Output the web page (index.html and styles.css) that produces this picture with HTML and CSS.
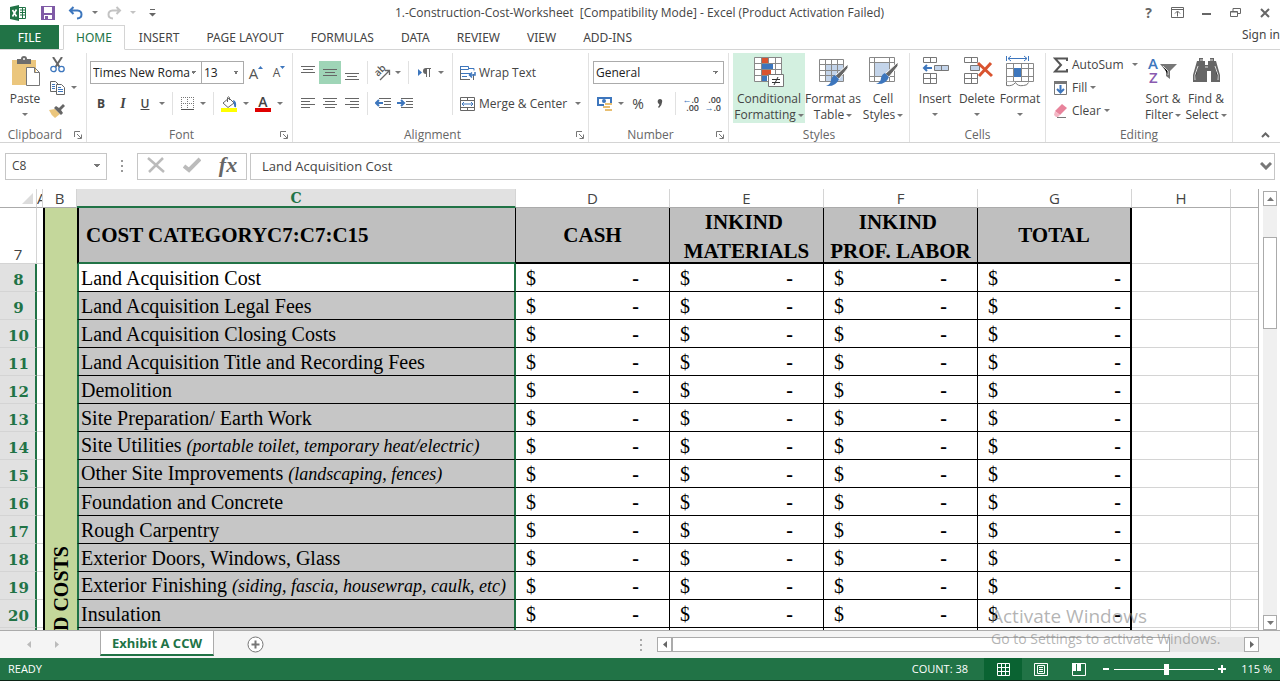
FILE: index.html
```html
<!DOCTYPE html>
<html lang="en">

<head>
    <meta charset="UTF-8">
    <meta name="viewport" content="width=device-width, initial-scale=1.0">
    <title>1.-Construction-Cost-Worksheet - Excel</title>
    <link rel="stylesheet" href="styles.css">
</head>

<body>
    <header class="titlebar">
        <div class="quick">
            <button class="btn w30" aria-label="Excel"><svg width="16" height="16"><path fill="#217346" d="M0 2l9-2v16l-9-2z"/><path fill="none" stroke="#217346" d="M9 2.500h6.500v11H9M10 5h5M10 7.500h5M10 10h5M12.500 3v10"/><path fill="none" stroke="#fff" stroke-width="1.600" d="M2.500 5l4 6.500M6.500 4.500l-4 7"/></svg></button>
            <button class="btn w30" aria-label="Save"><svg width="14" height="14"><path fill="#7f5aa6" d="M0 0h14v14H0z"/><path fill="#fff" d="M3 1h8v6H3zM3 9h8v4H3z"/><path fill="#7f5aa6" d="M4 10h3v3H4z"/></svg></button>
            <button class="btn w26" aria-label="Undo"><svg width="16" height="14"><path fill="none" stroke="#3d76bd" stroke-width="2" d="M5.500 1L2 4.500 5.500 8M2 4.500h7.500q4 .3 4 4t-4.500 4"/></svg></button>
            <button class="btn w12" aria-label="Undo list"><i class="caret"></i></button>
            <button class="btn w26" aria-label="Redo"><svg width="16" height="14"><path fill="none" stroke="#c3c3c3" stroke-width="2" d="M10.500 1L14 4.500 10.500 8M14 4.500H6.500q-4 .3-4 4t4.500 4"/></svg></button>
            <button class="btn w12" aria-label="Redo list"><i class="caret pale"></i></button>
            <button class="btn w26" aria-label="Customize"><svg width="7" height="8"><path fill="#666" d="M1 0h5v1H1zM0 4h7L3.500 7.500z"/></svg></button>
        </div>
        <h1>1.-Construction-Cost-Worksheet  [Compatibility Mode] - Excel (Product Activation Failed)</h1>
        <div class="window-buttons">
            <button class="btn help" aria-label="Help">?</button>
            <button class="btn" aria-label="Ribbon options"><svg width="13" height="11"><path fill="none" stroke="#666" d="M.5.5h12v10H.5zM.5 2.500h12M6.500 9.500v-5M4 6.500l2.500-2.500L9 6.500"/></svg></button>
            <button class="btn" aria-label="Minimize"><svg width="9" height="9"><path fill="#666" d="M0 5h9v2H0z"/></svg></button>
            <button class="btn" aria-label="Restore"><svg width="11" height="9"><path fill="none" stroke="#666" d="M3 3V.5h7.500v5H8M.5 3.500h7v5h-7zM.5 4h7"/></svg></button>
            <button class="btn" aria-label="Close"><svg width="10" height="10"><path fill="none" stroke="#666" stroke-width="2" d="M1 1l8 8M9 1L1 9"/></svg></button>
        </div>
    </header>

    <nav class="tabs">
        <a class="file" href="#">FILE</a>
        <a class="active" href="#">HOME</a>
        <a href="#">INSERT</a>
        <a href="#">PAGE LAYOUT</a>
        <a href="#">FORMULAS</a>
        <a href="#">DATA</a>
        <a href="#">REVIEW</a>
        <a href="#">VIEW</a>
        <a href="#">ADD-INS</a>
        <a class="signin" href="#">Sign in</a>
    </nav>

    <section class="ribbon">
        <div class="group clipboard">
            <div class="group-body">
                <button class="big w42"><svg width="32" height="32"><path fill="#ebc67d" d="M3 5h24v25H3z"/><path fill="#6d6d6d" d="M8 4h4q0-3 3-3t3 3h4v5H8z"/><circle cx="15" cy="4" r="1" fill="#fff"/><path fill="#fff" stroke="#777" d="M17.500 12.500h8l5 5v13h-13zM25.500 12.500v5h5"/></svg>Paste<i class="caret"></i></button>
                <div class="stack">
                    <button class="btn w22" aria-label="Cut"><svg width="15" height="16"><path fill="none" stroke="#666" stroke-width="2" d="M3 0l6.500 10M12 0L5.500 10"/><circle cx="3.500" cy="12" r="2.700" fill="none" stroke="#3d76bd" stroke-width="1.300"/><circle cx="11.500" cy="12" r="2.700" fill="none" stroke="#3d76bd" stroke-width="1.300"/></svg></button>
                    <div class="row">
                        <button class="btn w22" aria-label="Copy"><svg width="15" height="14"><path fill="#fff" stroke="#666" d="M.5.500h5l2.500 2.500v7.500H.5z"/><path stroke="#3d76bd" d="M2 3.500h3M2 5.500h3M2 7.500h3"/><path fill="#fff" stroke="#666" d="M6.500 3.500h5l3 3v7h-8z"/><path stroke="#3d76bd" d="M8 6.500h3M8 8.500h5M8 10.500h5"/></svg></button>
                        <button class="btn w12" aria-label="Copy options"><i class="caret"></i></button>
                    </div>
                    <button class="btn w22" aria-label="Format painter"><svg width="16" height="14"><path fill="#ebc67d" d="M0 6l6-1 5 5-5 4q-4-3-6-8z"/><path fill="#666" d="M5 4l2-2 3 2 4-4 2 2-4 4 2 3-2 2z"/></svg></button>
                </div>
            </div>
            <div class="group-label"><span>Clipboard</span><button class="launcher" aria-label="Clipboard options"><svg width="8" height="8"><path fill="none" stroke="#777" d="M.5 6V.5H6M3 3l4 4M7.500 3.500v4h-4"/></svg></button></div>
        </div>

        <div class="group font">
            <div class="group-body column">
                <div class="row">
                    <select class="pick font-name" aria-label="Font"><option>Times New Roma</option></select>
                    <select class="pick font-size" aria-label="Font size"><option>13</option></select>
                    <button class="btn w22 letter">A<svg width="5" height="3"><path fill="#3d76bd" d="M0 3h5L2.500 0z"/></svg></button>
                    <button class="btn w22 letter small">A<svg width="5" height="3"><path fill="#3d76bd" d="M0 0h5L2.500 3z"/></svg></button>
                </div>
                <div class="row">
                    <button class="btn w22 bold">B</button>
                    <button class="btn w22 italic">I</button>
                    <button class="btn w22 under">U</button>
                    <button class="btn w12" aria-label="Underline options"><i class="caret"></i></button>
                    <i class="sep"></i>
                    <button class="btn w20" aria-label="Borders"><svg width="13" height="13"><path fill="none" stroke="#777" stroke-dasharray="1 1" d="M0 .5h13M.5 0v13M12.500 0v13M6.500 0v13M0 6.500h13"/><path stroke="#555" d="M0 12.500h13"/></svg></button>
                    <button class="btn w12" aria-label="Border options"><i class="caret"></i></button>
                    <i class="sep"></i>
                    <button class="btn w22" aria-label="Fill color"><svg width="16" height="16"><path fill="#ff0" d="M0 12h16v4H0z"/><path fill="#fff" stroke="#666" d="M2 7l6-5 5 5-6 4.500z"/><path fill="none" stroke="#666" d="M6.500 6V1.500q1-1.500 2 0V4"/><path fill="#3d76bd" d="M12 4q4 1 3 7-2 1-2-2z"/></svg></button>
                    <button class="btn w12" aria-label="Fill color options"><i class="caret"></i></button>
                    <button class="btn w22 font-color">A</button>
                    <button class="btn w12" aria-label="Font color options"><i class="caret"></i></button>
                </div>
            </div>
            <div class="group-label"><span>Font</span><button class="launcher" aria-label="Font options"><svg width="8" height="8"><path fill="none" stroke="#777" d="M.5 6V.5H6M3 3l4 4M7.500 3.500v4h-4"/></svg></button></div>
        </div>

        <div class="group alignment">
            <div class="group-body">
                <div class="column">
                    <div class="row">
                        <button class="btn w22" aria-label="Top align"><svg width="14" height="14"><path stroke="#666" d="M0 .5h14M2 3.500h10M0 6.500h14"/></svg></button>
                        <button class="btn w22 on" aria-label="Middle align"><svg width="14" height="14"><path stroke="#666" d="M0 3.500h14M2 6.500h10M0 9.500h14"/></svg></button>
                        <button class="btn w22" aria-label="Bottom align"><svg width="14" height="14"><path stroke="#666" d="M0 7.500h14M2 10.500h10M0 13.500h14"/></svg></button>
                        <i class="sep"></i>
                        <button class="btn w20" aria-label="Orientation"><svg class="over" width="16" height="16"><text transform="translate(4 12) rotate(-45)" font-size="10" font-weight="600" fill="#555">ab</text><path fill="none" stroke="#666" stroke-width="1.300" d="M6 15l9-9M11 5.500h4.500V10"/></svg></button>
                        <button class="btn w12" aria-label="Orientation options"><i class="caret"></i></button>
                        <i class="sep"></i>
                        <button class="btn w22" aria-label="Text direction"><svg width="14" height="10"><path fill="#3d76bd" d="M1 1l4 3.500L1 8z"/><path fill="#666" d="M6 3q0-3 3-3h5v1h-1v8h-1V1h-2v8H9V6Q6 6 6 3z"/></svg></button>
                        <button class="btn w12" aria-label="Text direction options"><i class="caret"></i></button>
                    </div>
                    <div class="row">
                        <button class="btn w22" aria-label="Align left"><svg width="14" height="12"><path stroke="#666" d="M0 .5h14M0 3.500h9M0 6.500h14M0 9.500h9"/></svg></button>
                        <button class="btn w22" aria-label="Center"><svg width="14" height="12"><path stroke="#666" d="M0 .5h14M2 3.500h10M0 6.500h14M2 9.500h10"/></svg></button>
                        <button class="btn w22" aria-label="Align right"><svg width="14" height="12"><path stroke="#666" d="M0 .5h14M5 3.500h9M0 6.500h14M5 9.500h9"/></svg></button>
                        <i class="sep"></i>
                        <button class="btn w22" aria-label="Decrease indent"><svg width="16" height="12"><path stroke="#666" d="M4 .5h12M9 3.500h7M9 6.500h7M4 9.500h12"/><path fill="none" stroke="#3d76bd" stroke-width="2" d="M1 5h7M4 2L1 5l3 3"/></svg></button>
                        <button class="btn w22" aria-label="Increase indent"><svg width="16" height="12"><path stroke="#666" d="M4 .5h12M9 3.500h7M9 6.500h7M4 9.500h12"/><path fill="none" stroke="#3d76bd" stroke-width="2" d="M0 5h6M4 2l3 3-3 3"/></svg></button>
                    </div>
                </div>
                <i class="sep tall"></i>
                <div class="column">
                    <button class="labelled"><svg width="16" height="16"><path fill="#fff" stroke="#666" d="M.5 1v14M13.500 9v6M1 14.500h9"/><path fill="none" stroke="#3d76bd" d="M.5 1.500h8v3h-8zM8 3.500h6v2M1 8.500h9M2 11.500h5"/><path fill="none" stroke="#3d76bd" stroke-width="1.500" d="M15 7v3h-5M12 7.500L9.500 10l2.500 2.500"/></svg>Wrap Text</button>
                    <button class="labelled"><svg width="16" height="16"><path fill="#fff" stroke="#666" d="M.5 1.500h14v13H.5zM.5 4.500h14M.5 11.500h14M7.500 1.500v3M7.500 11.500v3"/><path fill="none" stroke="#3d76bd" d="M2 8h11M4 6L2 8l2 2M11 6l2 2-2 2"/></svg>Merge &amp; Center<i class="caret gap"></i></button>
                </div>
            </div>
            <div class="group-label"><span>Alignment</span><button class="launcher" aria-label="Alignment options"><svg width="8" height="8"><path fill="none" stroke="#777" d="M.5 6V.5H6M3 3l4 4M7.500 3.500v4h-4"/></svg></button></div>
        </div>

        <div class="group number">
            <div class="group-body column">
                <select class="pick" aria-label="Number format"><option>General</option></select>
                <div class="row">
                    <button class="btn w22" aria-label="Currency"><svg width="17" height="16"><path fill="#fff" stroke="#3d76bd" stroke-width="2" d="M2 2h13v7H2z"/><circle cx="8" cy="5" r="2" fill="#3d76bd"/><path stroke="#fff" stroke-width="8" d="M8 11h9"/><path stroke="#e8bf72" stroke-width="2" d="M9 8h7M7 11h7M9 14h7"/></svg></button>
                    <button class="btn w12" aria-label="Currency options"><i class="caret"></i></button>
                    <button class="btn w22 percent">%</button>
                    <button class="btn w22" aria-label="Comma style"><svg width="6" height="9"><path fill="#555" d="M1 1q2-2 4 0 1 4-3 8l-1-1q2-2 1-3-2-1-1-4z"/></svg></button>
                    <i class="sep"></i>
                    <button class="btn w22 decimals"><span><b>←</b>.0</span><span>.00</span></button>
                    <button class="btn w22 decimals"><span>.00</span><span><b>→</b>.0</span></button>
                </div>
            </div>
            <div class="group-label"><span>Number</span><button class="launcher" aria-label="Number options"><svg width="8" height="8"><path fill="none" stroke="#777" d="M.5 6V.5H6M3 3l4 4M7.500 3.500v4h-4"/></svg></button></div>
        </div>

        <div class="group styles">
            <div class="group-body">
                <button class="big w72 selected"><svg width="32" height="32"><path fill="#fff" stroke="#888" d="M1.500 2.500h27v24h-27zM1.500 8.500h27M1.500 14.500h27M1.500 20.500h27M8.500 2.500v24M15.500 2.500v24M22.500 2.500v24"/><path fill="#d9532f" d="M9 3h6v5H9zM9 15h9v5H9z"/><path fill="#3d76bd" d="M9 9h11v5H9zM9 21h5v5H9z"/><path fill="#fff" stroke="#777" d="M15.500 19.500h15v12h-15z"/><path stroke="#333" d="M19 24.500h8M19 27.500h8M25 22l-4 8"/></svg>Conditional<span>Formatting<i class="caret"></i></span></button>
                <button class="big w56"><svg width="32" height="32"><path fill="#fff" stroke="#888" d="M2.500 4.500h24v22h-24z"/><path fill="#c3d4ea" d="M9 10h17v16H9z"/><path fill="none" stroke="#888" d="M2.500 9.500h24M2.500 15.500h24M2.500 20.500h24M8.500 4.500v22M14.500 4.500v22M20.500 4.500v22"/><path fill="#666" stroke="#fff" d="M31 9v4l-9 11-4-3z"/><path fill="#3d76bd" d="M18 20l4 4q-3 8-13 7 5-2 5-6 1-4 4-5z"/></svg>Format as<span>Table<i class="caret"></i></span></button>
                <button class="big w44"><svg width="32" height="32"><path fill="#fff" stroke="#888" d="M2.500 2.500h25v24h-25zM2.500 7.500h25M2.500 21.500h25M7.500 2.500v24M22.500 2.500v24"/><path fill="#c3d4ea" d="M8 8h14v13H8z"/><path fill="#666" stroke="#fff" d="M31 7v4l-9 11-4-3z"/><path fill="#3d76bd" d="M18 18l4 4q-3 8-13 7 5-2 5-6 1-4 4-5z"/></svg>Cell<span>Styles<i class="caret"></i></span></button>
            </div>
            <div class="group-label"><span>Styles</span></div>
        </div>

        <div class="group cells">
            <div class="group-body">
                <button class="big w42"><svg width="32" height="32"><path fill="#fff" stroke="#777" d="M4.500 2.500h13v5h-13zM11.500 2.500v5M4.500 18.500h13v10h-13zM4.500 23.500h13M11.500 18.500v10"/><path fill="#c3d4ea" stroke="#777" d="M15.500 10.500h14v5h-14zM22.500 10.500v5"/><path fill="none" stroke="#3d76bd" stroke-width="2" d="M5 13h8M8 10l-3 3 3 3"/></svg>Insert<i class="caret"></i></button>
                <button class="big w42"><svg width="32" height="32"><path fill="#fff" stroke="#777" d="M3.500 2.500h13v5h-13zM10.500 2.500v5M3.500 18.500h13v10h-13zM3.500 23.500h13M10.500 18.500v10"/><path fill="#c3d4ea" stroke="#777" d="M9.500 10.500h9v5h-9z"/><path stroke="#d9532f" stroke-width="3" d="M17 8l14 13M30 8L18 21"/></svg>Delete<i class="caret"></i></button>
                <button class="big w44"><svg width="32" height="32"><path fill="#fff" stroke="#888" d="M2.500 8.500h27v18h-27zM2.500 13.500h27M2.500 21.500h27M9.500 8.500v18M17.500 8.500v18M24.500 8.500v18"/><path fill="#fff" stroke="#777" d="M2.500 26.500v4q6 1 9-3 2 4 8 3 4 0 5-3"/><path fill="#3d76bd" d="M10 13h7v9h-7z"/><path fill="none" stroke="#3d76bd" d="M2.500 1v5M24.500 1v5M4 3.500h19M7 1L4 3.500 7 6M20 1l3 2.500L20 6"/></svg>Format<i class="caret"></i></button>
            </div>
            <div class="group-label"><span>Cells</span></div>
        </div>

        <div class="group editing">
            <div class="group-body">
                <div class="stack lines">
                    <button class="labelled"><svg width="16" height="16"><path fill="none" stroke="#555" stroke-width="2" d="M14 4V1.500H2L8 8l-6 6.500h12V12"/></svg>AutoSum<i class="caret gap"></i></button>
                    <button class="labelled"><svg width="16" height="16"><path fill="#fff" stroke="#777" d="M1.500 1.500h12v13h-12z"/><path fill="#777" d="M1 1h13v3H1z"/><path fill="none" stroke="#3d76bd" stroke-width="2" d="M7.500 5v7M4 9l3.500 3.500L11 9"/></svg>Fill<i class="caret"></i></button>
                    <button class="labelled"><svg width="16" height="16"><path fill="#e8839b" d="M9 1l5 4-7 7-5-4z"/><path fill="#f3b6c4" d="M2 8l5 4-2 2H3l-2-2z"/><path stroke="#777" d="M4 14.500h9"/></svg>Clear<i class="caret"></i></button>
                </div>
                <button class="big w42"><svg class="over" width="32" height="32"><text x="1" y="14" font-size="15" font-weight="600" fill="#3d76bd">A</text><text x="2" y="28" font-size="15" font-weight="600" fill="#8a5bb0">Z</text><path fill="#777" d="M13 9h17l-7 7v8l-4-3v-5z"/><path stroke="#ddd" d="M16 11l5 5v4"/></svg>Sort &amp;<span>Filter<i class="caret"></i></span></button>
                <button class="big w44"><svg width="32" height="32"><path fill="#666" d="M9 3h4v3h2v4h3V6h2V3h4v3h2l4 14v7h-9V16h-4v11H3v-7L7 6h2z"/><path stroke="#ddd" d="M5 25v-5l3-9M28 25v-5l-3-9M10 5h3M20 5h3M15 12h3"/></svg>Find &amp;<span>Select<i class="caret"></i></span></button>
            </div>
            <div class="group-label"><span>Editing</span></div>
        </div>
        <button class="collapse" aria-label="Collapse ribbon"><svg width="9" height="6"><path fill="none" stroke="#666" stroke-width="2" d="M1 5l3.500-3.500L8 5"/></svg></button>
    </section>

    <section class="formula-bar">
        <select class="name-box" aria-label="Name box"><option>C8</option></select>
        <svg class="grip" width="3" height="12"><path fill="#999" d="M0 0h2v2H0zM0 5h2v2H0zM0 10h2v2H0z"/></svg>
        <div class="formula-buttons">
            <button class="btn" aria-label="Cancel"><svg width="18" height="16"><path fill="none" stroke="#bbb" stroke-width="2.500" d="M1 1l16 14M16 1L2 15"/></svg></button>
            <button class="btn" aria-label="Enter"><svg width="18" height="16"><path fill="none" stroke="#bbb" stroke-width="4" d="M1 9l5 4L17 2"/></svg></button>
            <button class="btn fx">fx</button>
        </div>
        <div class="formula-box">
            <input type="text" value="Land Acquisition Cost" aria-label="Formula">
            <svg width="12" height="8"><path fill="none" stroke="#777" stroke-width="3" d="M1 1l5 5 5-5"/></svg>
        </div>
    </section>

    <main class="sheet">
        <div class="grid-wrap">
            <table class="grid">
                <colgroup>
                    <col class="c-head"><col class="c-a"><col class="c-b"><col class="c-c">
                    <col class="c-money"><col class="c-money"><col class="c-money"><col class="c-money">
                    <col class="c-h"><col>
                </colgroup>
                <thead>
                    <tr>
                        <th class="corner"><svg width="11" height="11"><path fill="#dcdcdc" d="M11 0v11H0z"/></svg></th>
                        <th>A</th><th>B</th><th class="picked">C</th><th>D</th><th>E</th><th>F</th><th>G</th><th>H</th><th></th>
                    </tr>
                </thead>
                <tbody id="rows">
                    <tr class="titles">
                        <th>7</th>
                        <td class="a"></td>
                        <td class="side" rowspan="15"><span>D COSTS</span></td>
                        <td class="item">COST CATEGORYC7:C7:C15</td>
                        <td>CASH</td>
                        <td><div class="two-lines">INKIND&nbsp;<br>MATERIALS</div></td>
                        <td><div class="two-lines">INKIND&nbsp;<br>PROF. LABOR</div></td>
                        <td class="total">TOTAL</td>
                        <td class="blank"></td>
                        <td class="blank"></td>
                    </tr>
                </tbody>
            </table>
        </div>
        <div class="vscroll">
            <button class="arrow" aria-label="Scroll up"><svg width="7" height="4"><path fill="#777" d="M0 4h7L3.500 0z"/></svg></button>
            <div class="track"><div class="thumb"></div></div>
            <button class="arrow" aria-label="Scroll down"><svg width="7" height="4"><path fill="#777" d="M0 0h7L3.500 4z"/></svg></button>
        </div>
    </main>

    <section class="sheet-bar">
        <div class="sheet-nav">
            <button class="btn" aria-label="Previous sheet"><svg width="4" height="7"><path fill="#bbb" d="M4 0v7L0 3.500z"/></svg></button>
            <button class="btn" aria-label="Next sheet"><svg width="4" height="7"><path fill="#bbb" d="M0 0v7l4-3.500z"/></svg></button>
        </div>
        <a class="sheet-tab" href="#">Exhibit A CCW</a>
        <button class="btn add" aria-label="New sheet"><svg width="17" height="17"><circle cx="8.500" cy="8.500" r="7.500" fill="#fff" stroke="#777"/><path stroke="#777" stroke-width="2" d="M8.500 4.500v8M4.500 8.500h8"/></svg></button>
        <svg class="grip" width="3" height="12"><path fill="#aaa" d="M0 0h2v2H0zM0 5h2v2H0zM0 10h2v2H0z"/></svg>
        <div class="hscroll">
            <button class="arrow" aria-label="Scroll left"><svg width="4" height="7"><path fill="#666" d="M4 0v7L0 3.500z"/></svg></button>
            <div class="track"><div class="thumb"></div></div>
            <button class="arrow" aria-label="Scroll right"><svg width="4" height="7"><path fill="#666" d="M0 0v7l4-3.500z"/></svg></button>
        </div>
    </section>

    <footer class="status">
        <span>READY</span>
        <span class="count">COUNT: 38</span>
        <button class="view on" aria-label="Normal view"><svg width="13" height="13"><path fill="none" stroke="#fff" d="M.5.5h12v12H.5zM.5 4.500h12M.5 8.500h12M4.500.5v12M8.500.5v12"/></svg></button>
        <button class="view" aria-label="Page layout view"><svg width="14" height="13"><path fill="none" stroke="#fff" d="M.5.5h13v12H.5zM3.500 2.500h7v8h-7zM5 4.500h4M5 6.500h4M5 8.500h4"/></svg></button>
        <button class="view" aria-label="Page break view"><svg width="14" height="13"><path fill="none" stroke="#fff" d="M.5.5h13v12H.5z"/><path fill="#fff" d="M0 0h4v8H0zM5 0h4v8H5z"/></svg></button>
        <div class="zoom-control">
            <button class="zoom" aria-label="Zoom out"><svg width="8" height="8"><path fill="#fff" d="M1 3h6v2H1z"/></svg></button>
            <input type="range" min="10" max="210" value="115" aria-label="Zoom">
            <button class="zoom" aria-label="Zoom in"><svg width="8" height="8"><path fill="#fff" d="M0 3h8v2H0zM3 0h2v8H3z"/></svg></button>
        </div>
        <span class="percent-label">115 %</span>
    </footer>

    <aside class="watermark">
        <p class="big-line">Activate Windows</p>
        <p>Go to Settings to activate Windows.</p>
    </aside>

    <script>
        const items = [
            ['Land Acquisition Cost'],
            ['Land Acquisition Legal Fees'],
            ['Land Acquisition Closing Costs'],
            ['Land Acquisition Title and Recording Fees'],
            ['Demolition'],
            ['Site Preparation/ Earth Work'],
            ['Site Utilities', '(portable toilet, temporary heat/electric)'],
            ['Other Site Improvements', '(landscaping, fences)'],
            ['Foundation and Concrete'],
            ['Rough Carpentry'],
            ['Exterior Doors, Windows, Glass'],
            ['Exterior Finishing', '(siding, fascia, housewrap, caulk, etc)'],
            ['Insulation']
        ];

        const rows = document.getElementById('rows');

        function addRow(number, text, money) {
            const tr = document.createElement('tr');
            tr.innerHTML = `
                <th class="picked">${number}</th>
                <td class="a"></td>
                <td class="item">${text}</td>
                <td>${money}</td>
                <td>${money}</td>
                <td>${money}</td>
                <td class="total">${money}</td>
                <td class="blank"></td>
                <td class="blank"></td>`;
            rows.appendChild(tr);
        }

        items.forEach(([name, note], i) => {
            const text = note ? `${name} <em>${note}</em>` : name;
            addRow(i + 8, text, '<div class="money"><span>$</span><b>-</b></div>');
        });

        // next row only peeks out above the sheet tabs
        addRow('', '', '');
    </script>
</body>

</html>
```
FILE: styles.css
```css
* {
    box-sizing: border-box;
}

body {
    margin: 0;
    height: 100vh;
    display: flex;
    flex-direction: column;
    overflow: hidden;
    background: #fff;
    color: #444;
    font: 12px/16px "Open Sans", sans-serif;
}

button,
select,
input {
    font: inherit;
    color: inherit;
    margin: 0;
    padding: 0;
    border: none;
    background: none;
    border-radius: 0;
}

a {
    color: inherit;
    text-decoration: none;
}

svg {
    flex: none;
}

svg.over {
    overflow: visible;
}

.btn {
    height: 23px;
    flex: none;
    display: flex;
    align-items: center;
    justify-content: center;
}

.w12 { width: 12px; }
.w20 { width: 20px; }
.w22 { width: 22px; }
.w26 { width: 26px; }
.w30 { width: 30px; }
.w42 { width: 42px; }
.w44 { width: 44px; }
.w56 { width: 56px; }
.w72 { width: 72px; }

.caret {
    flex: none;
    display: inline-block;
    border: 3px solid transparent;
    border-top-color: #777;
    border-bottom: none;
}

.caret.pale {
    border-top-color: #c3c3c3;
}

/* title bar */
.titlebar {
    height: 25px;
    flex: none;
    display: flex;
    align-items: center;
}

.titlebar h1 {
    margin: 0;
    font-size: 12px;
    font-weight: 400;
    white-space: pre;
}

.quick,
.window-buttons {
    flex: 1;
    display: flex;
    padding-left: 3px;
}

.window-buttons {
    justify-content: flex-end;
    padding-right: 1px;
}

.window-buttons .btn {
    width: 29px;
}

.help {
    font-size: 14px;
    font-weight: 700;
    color: #666;
}

/* tabs */
.tabs {
    height: 25px;
    flex: none;
    display: flex;
    border-bottom: 1px solid #d4d4d4;
    font-family: "Noto Sans", sans-serif;
    line-height: 25px;
}

.tabs a {
    padding: 0 13px 0 14px;
}

.tabs .file {
    width: 59px;
    margin-right: 4px;
    background: #217346;
    color: #fff;
    text-align: center;
    padding: 0;
}

.tabs .active {
    height: 25px;
    border: 1px solid #d4d4d4;
    border-bottom-color: #fff;
    background: #fff;
    color: #217346;
    padding: 0 12px;
    line-height: 23px;
}

.tabs .signin {
    margin-left: auto;
    padding: 0;
    line-height: 20px;
}

/* ribbon */
.ribbon {
    height: 93px;
    flex: none;
    display: flex;
    padding-top: 3px;
    border-bottom: 1px solid #d4d4d4;
}

.group {
    flex: none;
    display: flex;
    flex-direction: column;
    border-right: 1px solid #e1e1e1;
}

.clipboard { width: 87px; }
.font { width: 206px; }
.alignment { width: 296px; }
.number { width: 140px; }
.styles { width: 181px; }
.cells { width: 136px; }
.editing { width: 187px; }

.group-body {
    height: 74px;
    display: flex;
    padding-left: 4px;
}

.font .group-body,
.editing .group-body {
    padding-left: 3px;
}

.column {
    display: flex;
    flex-direction: column;
    gap: 8px;
}

.group-body.column,
.group-body > .column,
.group-body > .sep {
    padding-top: 8px;
}

.row {
    display: flex;
    align-items: center;
}

.group-label {
    display: flex;
    align-items: center;
    height: 15px;
    color: #666;
}

.group-label span {
    flex: 1;
    text-align: center;
}

.launcher {
    width: 16px;
    display: flex;
    justify-content: center;
}

.big {
    flex: none;
    height: 70px;
    padding-top: 2px;
    display: flex;
    flex-direction: column;
    align-items: center;
    white-space: nowrap;
}

.big > svg {
    margin-bottom: 4px;
}

.big > .caret {
    margin-top: 6px;
}

.big span {
    display: flex;
    align-items: center;
    gap: 2px;
}

.selected {
    background: #d3f0e0;
}

.stack {
    display: flex;
    flex-direction: column;
}

.lines {
    width: 93px;
}

.labelled {
    height: 23px;
    display: flex;
    align-items: center;
    gap: 3px;
    padding-left: 4px;
    white-space: nowrap;
}

.labelled .gap {
    margin-left: 5px;
}

.sep {
    width: 1px;
    height: 23px;
    margin: 0 4px;
    background: #e1e1e1;
}

.sep.tall {
    height: 62px;
    margin: 0 3px;
}

.alignment .column:first-child {
    width: 152px;
}

.pick {
    height: 23px;
    appearance: none;
    border: 1px solid #ababab;
    padding: 0 2px;
    color: #222;
    background: linear-gradient(to bottom right, #777 50%, transparent 50%) right 4px center / 3px 3px no-repeat,
        linear-gradient(to bottom left, #777 50%, transparent 50%) right 7px center / 3px 3px no-repeat;
}

.font-name {
    width: 112px;
}

.font-size {
    width: 43px;
    margin-left: -1px;
}

.number .pick {
    width: 131px;
}

.letter {
    margin-left: 1px;
    font-size: 15px;
    color: #555;
}

.letter svg {
    align-self: flex-start;
    margin-top: 5px;
}

.letter.small {
    font-size: 12px;
}

.bold {
    font-weight: 700;
}

.italic {
    font: italic bold 14px "Liberation Serif", serif;
}

.under {
    font-weight: 600;
    text-decoration: underline;
}

.font-color {
    flex-direction: column;
    padding-top: 1px;
    font-weight: 600;
    font-size: 14px;
    line-height: 12px;
}

.font-color::after {
    content: "";
    width: 16px;
    height: 4px;
    background: #e00000;
}

.on {
    background: #9fd5b7;
}

.percent {
    font-size: 14px;
}

.decimals {
    flex-direction: column;
    align-items: flex-end;
    padding-right: 3px;
    font-size: 9px;
    font-weight: 600;
    line-height: 8px;
}

.decimals b {
    color: #3d76bd;
}

.decimals span {
    white-space: nowrap;
}

.collapse {
    margin-left: auto;
    align-self: flex-end;
    width: 30px;
    height: 16px;
}

/* formula bar */
.formula-bar {
    height: 46px;
    flex: none;
    display: flex;
    align-items: center;
    padding: 0 5px;
}

.name-box,
.formula-buttons,
.formula-box {
    height: 27px;
    border: 1px solid #c6c6c6;
}

.name-box {
    width: 102px;
    appearance: none;
    padding-left: 6px;
    background: linear-gradient(to bottom right, #777 50%, transparent 50%) right 5px center / 4px 4px no-repeat,
        linear-gradient(to bottom left, #777 50%, transparent 50%) right 9px center / 4px 4px no-repeat;
}

.formula-bar .grip {
    margin: 0 13px 0 14px;
}

.formula-buttons {
    width: 110px;
    display: flex;
    margin-right: 3px;
}

.formula-buttons .btn {
    flex: 1;
}

.fx {
    font: italic bold 22px "Liberation Serif", serif;
    color: #666;
}

.formula-box {
    flex: 1;
    display: flex;
    align-items: center;
    padding: 0 2px 0 11px;
}

.formula-box input {
    flex: 1;
    font-size: 13px;
}

/* worksheet */
.sheet {
    flex: 1;
    min-height: 0;
    display: flex;
}

.grid-wrap {
    flex: 1;
    overflow: hidden;
    border-right: 1px solid #ababab;
}

.grid {
    width: 100%;
    table-layout: fixed;
    border-collapse: separate;
    border-spacing: 0;
}

.c-head { width: 37px; }
.c-a { width: 6px; }
.c-b { width: 34px; }
.c-c { width: 439px; }
.c-money { width: 154px; }
.c-h { width: 99px; }

.grid th,
.grid td {
    height: 28px;
    padding: 0;
    overflow: hidden;
    white-space: nowrap;
}

.grid th {
    font-size: 15px;
    font-weight: 400;
    line-height: 18px;
    border-right: 1px solid #d4d4d4;
    border-bottom: 1px solid #d4d4d4;
}

.grid thead th {
    height: 19px;
    border-bottom-color: #ababab;
}

.grid th.picked {
    background: #e1e1e1;
    color: #217346;
    font: bold 15px/18px "DejaVu Serif", serif;
    border-right: 2px solid #217346;
    padding: 5px 0 0 2px;
}

.grid thead th.picked {
    padding: 0;
    font-size: 14px;
    line-height: 16px;
    border-right: 1px solid #d4d4d4;
    border-bottom: 2px solid #217346;
}

.corner svg {
    float: right;
    margin-right: 3px;
}

.grid td {
    border-right: 1px solid #000;
    border-bottom: 1px solid #000;
    color: #000;
    font: 20px/24px "Liberation Serif", serif;
}

.grid em {
    font-size: 18px;
}

.grid .a,
.grid .blank {
    border-color: #d4d4d4;
}

.grid .a,
.grid tr > :last-child {
    border-right: none;
}

.grid .side {
    background: #c4d79b;
    border-left: 2px solid #000;
    border-right: none;
    vertical-align: bottom;
    padding: 0 0 18px 4px;
    font-weight: 700;
}

.side span {
    writing-mode: vertical-rl;
    transform: rotate(180deg);
}

.grid .item {
    background: #c6c6c6;
    border-left: 2px solid #217346;
    border-right: 2px solid #217346;
    padding-left: 2px;
}

.grid tr:nth-child(2) .item {
    background: #fff;
}

.grid .total {
    border-right: 2px solid #000;
}

.grid .titles td {
    height: 56px;
    font: bold 21px/29px "Liberation Serif", serif;
    text-align: center;
    border-bottom-width: 2px;
}

.grid .titles td:not(.a, .side, .blank) {
    background: #bfbfbf;
}

.grid .titles .blank,
.grid .titles .a {
    border-bottom-width: 1px;
}

.grid .titles .item {
    text-align: left;
    padding-left: 7px;
    border-left-color: #000;
    border-right: 1px solid #000;
    border-bottom-color: #217346;
}

.grid .titles .side {
    font-size: 20px;
    line-height: 24px;
    text-align: left;
}

.two-lines {
    height: 54px;
}

.titles th {
    vertical-align: bottom;
}

.money {
    display: flex;
    justify-content: space-between;
    padding: 0 30px 0 10px;
}

.total .money {
    padding-right: 9px;
}

/* scroll bars */
.vscroll {
    width: 21px;
    display: flex;
    flex-direction: column;
    padding: 2px 3px 0 4px;
}

.arrow {
    flex: none;
    width: 15px;
    height: 15px;
    display: flex;
    align-items: center;
    justify-content: center;
    border: 1px solid #ababab;
    background: #fff;
}

.track {
    flex: 1;
    background: #f0f0f0;
}

.thumb {
    background: #fff;
    border: 1px solid #ababab;
}

.vscroll .track {
    padding-top: 31px;
}

.vscroll .thumb {
    height: 92px;
}

.vscroll .arrow {
    width: 14px;
}

.hscroll {
    width: 47%;
    display: flex;
    margin-right: 21px;
}

.hscroll .track {
    background: #e6e6e6;
}

.hscroll .thumb {
    width: 87%;
    height: 15px;
}

.sheet-bar {
    height: 28px;
    flex: none;
    display: flex;
    align-items: center;
    background: #f4f4f4;
    border-top: 1px solid #ababab;
}

.sheet-nav {
    width: 100px;
    display: flex;
    padding-left: 15px;
}

.sheet-nav .btn {
    width: 28px;
}

.sheet-tab {
    align-self: flex-start;
    height: 25px;
    padding: 0 11px;
    background: #fff;
    border: solid #ababab;
    border-width: 0 1px;
    border-bottom: 2px solid #217346;
    color: #217346;
    font-size: 13px;
    font-weight: 700;
    line-height: 25px;
}

.add {
    margin: 0 auto 0 33px;
}

.sheet-bar .grip {
    margin-right: 14px;
}

/* status bar */
.status {
    height: 23px;
    flex: none;
    display: flex;
    align-items: center;
    padding: 0 8px;
    background: #217346;
    border-bottom: 1px solid #0c2416;
    color: #fff;
    font-size: 11px;
}

.count {
    margin-left: auto;
    margin-right: 16px;
}

.view {
    width: 38px;
    height: 22px;
    display: flex;
    align-items: center;
    justify-content: center;
}

.view.on {
    background: #0a6332;
}

.zoom-control {
    display: flex;
    align-items: center;
    margin-left: 2px;
}

.zoom {
    width: 12px;
    height: 22px;
    display: flex;
    align-items: center;
    justify-content: center;
}

.status input {
    appearance: none;
    width: 104px;
    height: 11px;
    background: linear-gradient(#fff, #fff) center / 100px 1px no-repeat;
}

.status input::-webkit-slider-thumb {
    appearance: none;
    width: 5px;
    height: 11px;
    background: #fff;
}

.percent-label {
    width: 44px;
    text-align: right;
}

/* activation notice over the sheet */
.watermark {
    position: absolute;
    right: 52px;
    bottom: 32px;
    width: 237px;
    color: rgba(130, 130, 130, 0.6);
    font-size: 14px;
    line-height: 20px;
    white-space: nowrap;
    pointer-events: none;
}

.watermark p {
    margin: 0;
}

.watermark .big-line {
    font-size: 19px;
    line-height: 26px;
}
```
